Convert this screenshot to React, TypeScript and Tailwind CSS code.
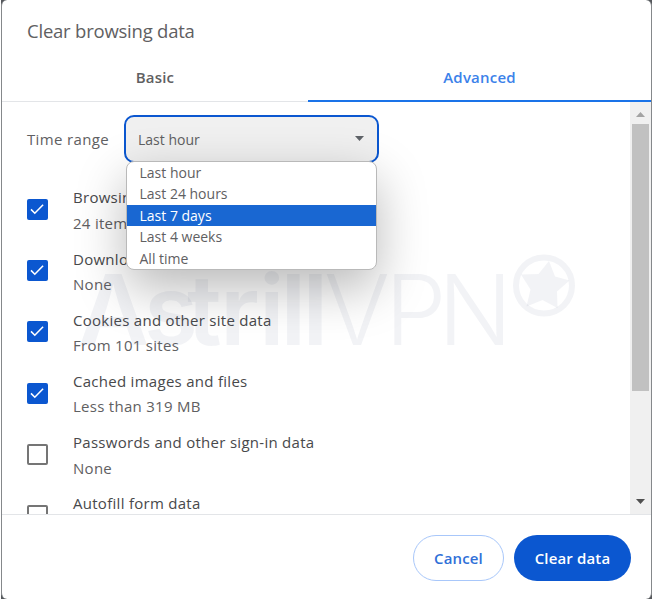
import { useState } from "react";

const ranges = ["Last hour", "Last 24 hours", "Last 7 days", "Last 4 weeks", "All time"];

const items = [
  { title: "Browsing history", detail: "24 items", checked: true },
  { title: "Download history", detail: "None", checked: true },
  { title: "Cookies and other site data", detail: "From 101 sites", checked: true },
  { title: "Cached images and files", detail: "Less than 319 MB", checked: true },
  { title: "Passwords and other sign-in data", detail: "None", checked: false },
  { title: "Autofill form data", detail: "None", checked: false },
];

const Checkbox = ({ checked }: { checked: boolean }) =>
  checked ? (
    <span className="flex size-[21px] shrink-0 items-center justify-center rounded-xs bg-[#0b57d0]">
      <svg viewBox="0 0 21 21" className="size-[21px]" fill="none" stroke="#fff" strokeWidth="1.6">
        <path d="M4 10.400l3.800 3.800 8.300-8.400" />
      </svg>
    </span>
  ) : (
    <span className="size-[21px] shrink-0 rounded-xs border-2 border-[#757575] bg-white" />
  );

const Watermark = () => (
  <svg
    className="pointer-events-none absolute top-[140px] left-[76px] z-10"
    width="500"
    height="110"
    viewBox="78 242 500 110"
    fill="#5a6a8c"
    fillOpacity="0.08"
  >
    <text x="78 144 187 220 259 280.500 302.500" y="344.5" fontSize="98" fontWeight="600" fontFamily="Inter, sans-serif">
      Astrill
    </text>
    <text x="324 385 438" y="344.5" fontSize="98" fontWeight="300" fontFamily="Inter, sans-serif">
      VPN
    </text>
    <circle cx="544" cy="285.5" r="28" fill="none" stroke="#5a6a8c" strokeOpacity="0.08" strokeWidth="6" />
    <path d="M549 261l6 15.500 14.500 4-12.500 11 .5 16.500-15-8-16 6.500 4-17-9.500-15 17.500-.5z" />
  </svg>
);

const App = () => {
  const [tab, setTab] = useState("Advanced");
  const [selected, setSelected] = useState("Last 7 days");

  return (
    <div className="h-[601px] w-[654px] overflow-hidden bg-white pl-px font-['Open_Sans',sans-serif] text-[#5f6062]">
      <div className="h-[599px] w-[651px] bg-[#55585c]">
        <div className="flex h-[599px] w-[651px] flex-col overflow-hidden rounded-md border-x border-[#85888b] bg-white">
          <h1 className="h-[54px] pt-[18px] pl-[25px] text-[18.5px] leading-[26px] tracking-[-0.22px] whitespace-nowrap">
            Clear browsing data
          </h1>

          {/* Tabs */}
          <div className="flex h-12 shrink-0 border-b border-[#e3e5e8]">
            {["Basic", "Advanced"].map((name) => (
              <button
                key={name}
                onClick={() => setTab(name)}
                className={`h-12 text-[15px] font-semibold tracking-[0.2px] ${
                  tab === name
                    ? "flex-1 border-b-2 border-[#1a73e8] text-[#3b82ea]"
                    : "w-[306px] border-b-2 border-transparent"
                }`}
              >
                {name}
              </button>
            ))}
          </div>

          {/* Scrolling area */}
          <div className="relative flex h-[412px] shrink-0 overflow-hidden">
            <div className="min-w-0 flex-1 pl-[25px]">
              <div className="flex items-center gap-4 pt-[13px]">
                <span className="w-[81px] text-[15px] tracking-[0.35px] whitespace-nowrap">Time range</span>
                <div className="relative">
                  <button className="flex h-12 w-[255px] items-center justify-between rounded-[10px] border-2 border-[#0b57d0] bg-[#f0f0f0] pr-[13px] pl-3 text-[14px]">
                    <span>Last hour</span>
                    <svg className="mb-0.5" width="9" height="5" viewBox="0 0 9 5" fill="#5f6368">
                      <path d="M0 0h9L4.500 5z" />
                    </svg>
                  </button>
                  <ul className="absolute top-[46px] left-[2px] z-20 h-[109px] w-[251px] overflow-hidden rounded-lg border border-[#b9b9b9] bg-white shadow-[0_18px_50px_rgba(0,0,0,0.28)]">
                    {ranges.map((range) => (
                      <li
                        key={range}
                        onClick={() => setSelected(range)}
                        className={`h-[21.4px] pl-[12.500px] text-[14px] leading-[21px] ${
                          selected === range ? "bg-[#1967d2] text-white" : ""
                        }`}
                      >
                        {range}
                      </li>
                    ))}
                  </ul>
                </div>
              </div>

              <div className="pt-4">
                {items.map((item) => (
                  <div key={item.title} className="flex h-[61.2px] items-center gap-[25px]">
                    <Checkbox checked={item.checked} />
                    <div className="pt-[2.500px] text-[15px] leading-[25.500px] tracking-[0.28px] whitespace-nowrap">
                      <div className="text-[#48494b]">{item.title}</div>
                      <div>{item.detail}</div>
                    </div>
                  </div>
                ))}
              </div>
            </div>

            {/* Scrollbar */}
            <div className="flex w-[21px] shrink-0 flex-col items-center justify-between bg-[#f0f0f0] pt-2.5 pb-2.5">
              <svg width="9" height="5" viewBox="0 0 9 5" fill="#a3a3a3">
                <path d="M0 5h9L4.500 0z" />
              </svg>
              <div className="mt-[7px] mb-auto h-[267px] w-[17px] bg-[#c1c1c1]" />
              <svg width="9" height="5" viewBox="0 0 9 5" fill="#505050">
                <path d="M0 0h9L4.500 5z" />
              </svg>
            </div>
            <Watermark />
          </div>

          {/* Footer */}
          <div className="flex flex-1 justify-end gap-2.5 border-t border-[#e3e5e8] pt-5 pr-5">
            <button className="h-[46px] w-[91px] rounded-full border border-[#a8c7fa] text-[15px] font-semibold tracking-[0.15px] text-[#3070d8]">
              Cancel
            </button>
            <button className="h-[46px] w-[117px] rounded-full bg-[#0b57d0] text-[15px] font-semibold tracking-[0.15px] text-white">
              Clear data
            </button>
          </div>
        </div>
      </div>
    </div>
  );
};

export default App;
